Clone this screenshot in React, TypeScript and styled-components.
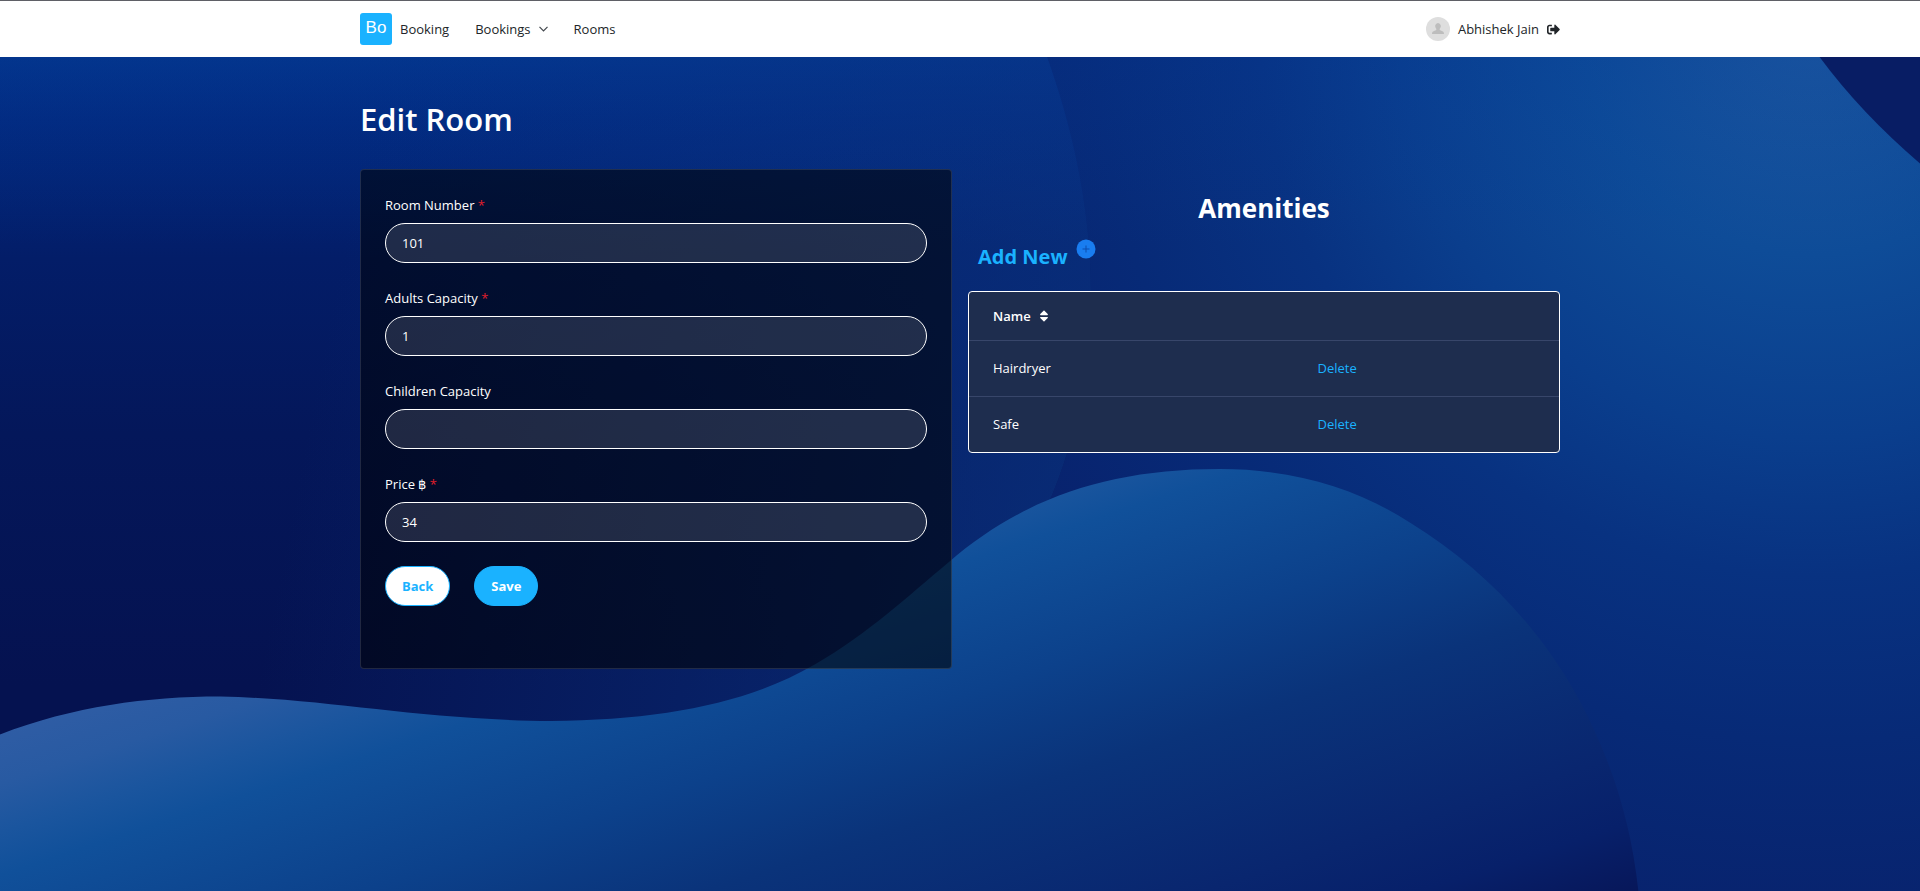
import React from "react";
import styled, { createGlobalStyle } from "styled-components";
import { FaSort, FaSignOutAlt } from "react-icons/fa";

const ACCENT = "#1ab2ff";

const GlobalStyle = createGlobalStyle`
  *, *::before, *::after { box-sizing: border-box; }
  html, body, #root { height: 100%; }
  body {
    margin: 0;
    background: #061b66;
    color: #fff;
    font-family: "Segoe UI", "Open Sans", "Noto Sans", sans-serif;
    font-size: 13px;
    line-height: 22px;
  }
  h1, h2, p { margin: 0; }
  a { color: inherit; text-decoration: none; }
  button, input { font: inherit; }
`;

const Page = styled.div`
  display: flex;
  flex-direction: column;
  min-height: 100%;
`;

const Container = styled.div`
  width: 100%;
  max-width: 1200px;
  margin: 0 auto;
`;

const Header = styled.header`
  background: #fff;
  color: #212529;
  border-top: 1px solid #5f6066;
`;

const HeaderRow = styled(Container)`
  display: flex;
  align-items: center;
  justify-content: space-between;
  height: 56px;
`;

const Nav = styled.nav`
  display: flex;
  align-items: center;
  gap: 26px;
`;

const NavLink = styled.a`
  display: flex;
  align-items: center;
  gap: 8px;
`;

const Logo = styled.span`
  width: 32px;
  height: 32px;
  border-radius: 3px;
  background: ${ACCENT};
  color: #fff;
  font: 17px/30px "Liberation Sans", Arial, sans-serif;
  text-align: center;
`;

const Main = styled.main`
  position: relative;
  flex: 1;
  isolation: isolate;
  padding: 40px 0;
`;

const Backdrop = styled.svg`
  position: absolute;
  inset: 0;
  z-index: -1;
  width: 100%;
  height: 100%;
`;

const Title = styled.h1`
  font-size: 31px;
  line-height: 44px;
  font-weight: 600;
`;

const Columns = styled.div`
  display: grid;
  grid-template-columns: 1fr 1fr;
  align-items: start;
  gap: 16px;
  margin-top: 28px;
`;

const FormPanel = styled.form`
  display: flex;
  flex-direction: column;
  gap: 24px;
  min-height: 500px;
  padding: 24px;
  border: 1px solid rgba(255, 255, 255, 0.12);
  border-radius: 4px;
  background: rgba(0, 0, 0, 0.55);
`;

const Field = styled.div`
  display: flex;
  flex-direction: column;
  gap: 7px;
`;

const Required = styled.span`
  color: #e01e2b;
`;

const TextInput = styled.input`
  width: 100%;
  height: 40px;
  padding: 0 16px;
  border: 1px solid #fff;
  border-radius: 20px;
  background: rgba(255, 255, 255, 0.12);
  color: #fff;
  outline: none;
`;

const Actions = styled.div`
  display: flex;
  gap: 24px;
`;

const PillButton = styled.button<{ $primary?: boolean }>`
  height: 40px;
  padding: 0 16px;
  border: 1px solid ${ACCENT};
  border-radius: 20px;
  background: ${(p) => (p.$primary ? ACCENT : "#fff")};
  color: ${(p) => (p.$primary ? "#fff" : ACCENT)};
  font-weight: 700;
  cursor: pointer;
`;

const Side = styled.section`
  display: flex;
  flex-direction: column;
  padding-top: 20px;
`;

const SideTitle = styled.h2`
  font-size: 26px;
  line-height: 38px;
  font-weight: 700;
  text-align: center;
`;

const AddButton = styled.button`
  display: flex;
  align-items: flex-start;
  align-self: flex-start;
  gap: 8px;
  margin: 12px 0 16px;
  padding: 0 10px;
  border: 0;
  background: none;
  color: ${ACCENT};
  font-size: 20px;
  line-height: 36px;
  font-weight: 700;
  cursor: pointer;
`;

const TableFrame = styled.div`
  border: 1px solid #fff;
  border-radius: 4px;
  background: #1e2d4e;
`;

const Table = styled.table`
  width: 100%;
  table-layout: fixed;
  border-collapse: collapse;

  th, td {
    height: 56px;
    padding: 0 24px;
    text-align: left;
    vertical-align: middle;
  }
  th { height: 48px; font-weight: 600; }
  th:first-child { width: 55%; }
  tbody tr { border-top: 1px solid #38466a; }
`;

const SortButton = styled.button`
  display: inline-flex;
  align-items: center;
  gap: 6px;
  padding: 0;
  border: 0;
  background: none;
  color: inherit;
  cursor: pointer;
`;

const DeleteButton = styled.button`
  padding: 0;
  border: 0;
  background: none;
  color: ${ACCENT};
  cursor: pointer;
`;

function WaveBackdrop() {
  return (
    <Backdrop viewBox="0 46 1568 682" preserveAspectRatio="none" aria-hidden="true">
      <defs>
        <linearGradient id="left" gradientUnits="userSpaceOnUse" x1="0" y1="46" x2="0" y2="560">
          <stop offset="0" stopColor="#033389" />
          <stop offset="0.1" stopColor="#02297e" />
          <stop offset="0.32" stopColor="#031d68" />
          <stop offset="0.6" stopColor="#04175a" />
          <stop offset="1" stopColor="#051250" />
        </linearGradient>
        <linearGradient id="leftGlow" gradientUnits="userSpaceOnUse" x1="260" y1="300" x2="880" y2="420">
          <stop offset="0" stopColor="#0a327f" stopOpacity="0" />
          <stop offset="1" stopColor="#0a327f" stopOpacity="0.75" />
        </linearGradient>
        <linearGradient id="topGlow" gradientUnits="userSpaceOnUse" x1="0" y1="46" x2="0" y2="200">
          <stop offset="0" stopColor="#043a9a" stopOpacity="0.25" />
          <stop offset="1" stopColor="#043a9a" stopOpacity="0" />
        </linearGradient>
        <radialGradient id="right" gradientUnits="userSpaceOnUse" cx="1480" cy="20" r="750">
          <stop offset="0" stopColor="#1f5aa0" />
          <stop offset="0.25" stopColor="#0e4c98" />
          <stop offset="0.45" stopColor="#0a3e8d" />
          <stop offset="0.6" stopColor="#083281" />
          <stop offset="0.78" stopColor="#072a77" />
          <stop offset="1" stopColor="#08226d" />
        </radialGradient>
        <linearGradient id="wave" gradientUnits="userSpaceOnUse" x1="174" y1="532" x2="343" y2="1051">
          <stop offset="0" stopColor="#305da5" />
          <stop offset="0.09" stopColor="#285aa2" />
          <stop offset="0.16" stopColor="#1a559e" />
          <stop offset="0.22" stopColor="#10509a" />
          <stop offset="0.41" stopColor="#0c418b" />
          <stop offset="0.57" stopColor="#0a337a" />
          <stop offset="0.8" stopColor="#09266f" />
          <stop offset="0.9" stopColor="#07206a" />
          <stop offset="1" stopColor="#07175a" />
        </linearGradient>
      </defs>
      <rect y="46" width="1568" height="682" fill="url(#right)" />
      <path d="M0 46H855C885 130 900 220 885 310Q860 480 700 600H0Z" fill="url(#left)" />
      <path d="M0 46H855C885 130 900 220 885 310Q860 480 700 600H0Z" fill="url(#leftGlow)" />
      <rect y="46" width="1568" height="154" fill="url(#topGlow)" />
      <path d="M1486 46Q1520 92 1568 133V46Z" fill="#081d64" />
      <path d="M0 600C60 577 120 569 180 569C270 571 340 588 450 589C540 588 610 575 665 543C710 517 740 488 775 459C835 407 905 383 996 383C1060 383 1110 400 1152 427C1210 463 1256 510 1291 574C1315 620 1332 670 1338 728H0Z" fill="url(#wave)" />
    </Backdrop>
  );
}

const fields = [
  { id: "room-number", label: "Room Number", value: "101", required: true },
  { id: "adults", label: "Adults Capacity", value: "1", required: true },
  { id: "children", label: "Children Capacity", value: "", required: false },
  { id: "price", label: "Price ฿", value: "34", required: true },
];

const amenities = ["Hairdryer", "Safe"];

export default function App() {
  return (
    <Page>
      <GlobalStyle />
      <Header>
        <HeaderRow>
          <Nav>
            <NavLink href="#home"><Logo>Bo</Logo>Booking</NavLink>
            <NavLink href="#bookings">
              Bookings
              <svg width="9" height="6" viewBox="0 0 9 6" fill="none" stroke="#43484e" strokeWidth="1.2" aria-hidden="true">
                <path d="M0.5 0.8L4.500 4.800L8.500 0.8" />
              </svg>
            </NavLink>
            <NavLink href="#rooms">Rooms</NavLink>
          </Nav>
          <NavLink href="#logout">
            <svg width="24" height="24" viewBox="0 0 24 24" aria-hidden="true">
              <circle cx="12" cy="12" r="12" fill="#dedede" />
              <path d="M12 6a3 3.3 0 0 1 1.6 6c0 1 .6 1.400 2.300 1.900 1.600.5 2.100 1.200 2.100 3.100H6c0-1.900.5-2.600 2.100-3.100 1.700-.5 2.300-.9 2.300-1.900A3 3.300 0 0 1 12 6Z" fill="#bdbdbd" />
            </svg>
            Abhishek Jain
            <FaSignOutAlt size={13} />
          </NavLink>
        </HeaderRow>
      </Header>
      <Main>
        <WaveBackdrop />
        <Container>
          <Title>Edit Room</Title>
          <Columns>
            <FormPanel onSubmit={(e) => e.preventDefault()}>
              {fields.map((f) => (
                <Field key={f.id}>
                  <label htmlFor={f.id}>
                    {f.label} {f.required && <Required>*</Required>}
                  </label>
                  <TextInput id={f.id} defaultValue={f.value} />
                </Field>
              ))}
              <Actions>
                <PillButton type="button">Back</PillButton>
                <PillButton type="submit" $primary>Save</PillButton>
              </Actions>
            </FormPanel>
            <Side>
              <SideTitle>Amenities</SideTitle>
              <AddButton type="button">
                Add New
                <svg width="20" height="20" viewBox="0 0 20 20" aria-hidden="true">
                  <circle cx="10" cy="10" r="9.500" fill="#197df0" />
                  <path d="M10 6.500v7M6.500 10h7" stroke="#0c4fb0" />
                </svg>
              </AddButton>
              <TableFrame>
                <Table>
                  <thead>
                    <tr>
                      <th><SortButton type="button">Name <FaSort size={14} /></SortButton></th>
                      <th />
                    </tr>
                  </thead>
                  <tbody>
                    {amenities.map((name) => (
                      <tr key={name}>
                        <td>{name}</td>
                        <td><DeleteButton type="button">Delete</DeleteButton></td>
                      </tr>
                    ))}
                  </tbody>
                </Table>
              </TableFrame>
            </Side>
          </Columns>
        </Container>
      </Main>
    </Page>
  );
}
